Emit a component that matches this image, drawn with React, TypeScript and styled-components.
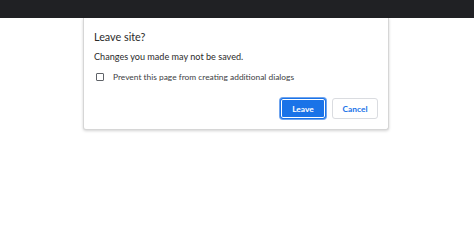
import React from "react";
import styled, { createGlobalStyle } from "styled-components";

const Global = createGlobalStyle`
  html, body { margin: 0; padding: 0; background: #ffffff; }
  body { font-family: Lato, "Noto Sans", Arial, sans-serif; }
  #root { width: 474px; height: 248px; position: relative; overflow: hidden; }
`;

const TopBar = styled.div`
  height: 18px;
  background: #202124;
`;

const Dialog = styled.div`
  position: absolute;
  left: 83px;
  top: 18px;
  width: 306px;
  height: 112px;
  box-sizing: border-box;
  background: #fff;
  border: 1px solid #d6d6d6;
  border-top: none;
  border-radius: 0 0 3px 3px;
  box-shadow: 0 1px 3px rgba(0, 0, 0, 0.18);
  padding: 12px 10px 10px 10px;
  display: flex;
  flex-direction: column;
`;

const Title = styled.div`
  font-size: 10.8px;
  color: #2b2b2b;
  line-height: 14px;
`;

const Message = styled.div`
  margin-top: 6px;
  font-size: 9.1px;
  color: #2b2b2b;
  line-height: 14px;
`;

const CheckRow = styled.label`
  margin-top: 7px;
  display: flex;
  align-items: center;
  gap: 9px;
  font-size: 8.4px;
  color: #3c4043;
  line-height: 12px;
`;

const Box = styled.span`
  width: 6px;
  height: 6px;
  border: 1px solid #5f6368;
  border-radius: 1px;
  margin-left: 2px;
`;

const Actions = styled.div`
  margin-top: auto;
  display: flex;
  justify-content: flex-end;
  gap: 6px;
`;

const Button = styled.button<{ $primary?: boolean }>`
  box-sizing: border-box;
  height: 21px;
  width: 46px;
  font-family: inherit;
  font-size: 8.4px;
  font-weight: 700;
  border-radius: 3px;
  padding: 0;
  cursor: pointer;
  background: ${(p) => (p.$primary ? "#1a73e8" : "#ffffff")};
  color: ${(p) => (p.$primary ? "#ffffff" : "#1a73e8")};
  border: 1px solid ${(p) => (p.$primary ? "#1a73e8" : "#dadce0")};
  box-shadow: ${(p) => (p.$primary ? "0 0 0 1px #fff inset, 0 0 0 1px #6fa4ee" : "none")};
`;

export default function App() {
  return (
    <>
      <Global />
      <TopBar />
      <Dialog>
        <Title>Leave site?</Title>
        <Message>Changes you made may not be saved.</Message>
        <CheckRow>
          <Box />
          Prevent this page from creating additional dialogs
        </CheckRow>
        <Actions>
          <Button $primary>Leave</Button>
          <Button>Cancel</Button>
        </Actions>
      </Dialog>
    </>
  );
}
